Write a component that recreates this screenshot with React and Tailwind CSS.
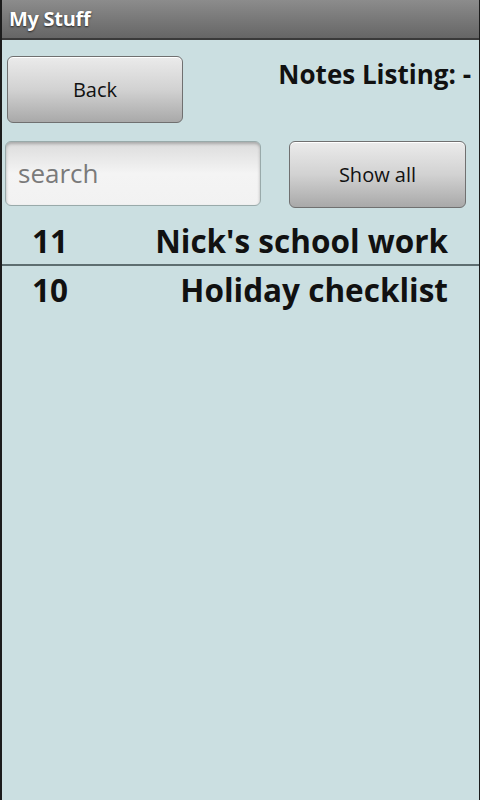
import React from 'react';

const notes = [
  { id: 11, title: "Nick's school work" },
  { id: 10, title: 'Holiday checklist' },
];

function GrayButton({ children, className }) {
  return (
    <button
      className={`flex items-center justify-center rounded-[6px] border border-[#707070] bg-gradient-to-b from-[#ebebeb] via-[#d2d2d2] to-[#a9a9a9] text-[20px] text-[#111] shadow-[inset_0_1px_0_#fff] ${className}`}
    >
      {children}
    </button>
  );
}

export default function App() {
  return (
    <div
      className="flex h-[800px] w-[480px] flex-col overflow-hidden border-l-2 border-r border-[#1c1c1c] bg-[#cbdfe1]"
      style={{ fontFamily: '"Open Sans", "DejaVu Sans", sans-serif' }}
    >
      {/* Title bar */}
      <div className="flex h-[40px] shrink-0 items-center border-b-2 border-[#3a3a3a] bg-gradient-to-b from-[#8c8c8c] to-[#666] pl-[7px]">
        <span className="text-[20px] font-bold tracking-[-0.3px] text-white [text-shadow:0_1px_2px_#222]">My Stuff</span>
      </div>

      {/* Back + heading */}
      <div className="flex items-start justify-between pl-[5px] pr-[8px] pt-[16px]">
        <GrayButton className="h-[67px] w-[176px]">Back</GrayButton>
        <span className="mt-[1px] text-[26px] font-bold leading-[34px] text-[#111]">Notes Listing: -</span>
      </div>

      {/* Search + show all */}
      <div className="flex items-start justify-between pl-[3px] pr-[13px] pt-[18px]">
        <div className="flex h-[65px] w-[256px] items-center rounded-[6px] border border-[#9aa] bg-gradient-to-b from-[#dcdcdc] via-[#f4f4f4] to-[#f2f2f2] pl-[12px] shadow-[inset_0_2px_3px_#aaa]">
          <span className="text-[26px] text-[#7a7a7a]">search</span>
        </div>
        <GrayButton className="h-[67px] w-[177px]">Show all</GrayButton>
      </div>

      {/* Notes list */}
      <div className="mt-[10px] flex flex-col">
        {notes.map((n, i) => (
          <div
            key={n.id}
            className={`flex h-[48px] items-center justify-between pl-[30px] pr-[31px] ${i === 0 ? 'border-b-2 border-[#5e6e70]' : ''}`}
          >
            <span className="text-[31.5px] font-bold leading-none text-[#111]">{n.id}</span>
            <span className="text-[31.5px] font-bold leading-none text-[#111]">{n.title}</span>
          </div>
        ))}
      </div>
    </div>
  );
}
